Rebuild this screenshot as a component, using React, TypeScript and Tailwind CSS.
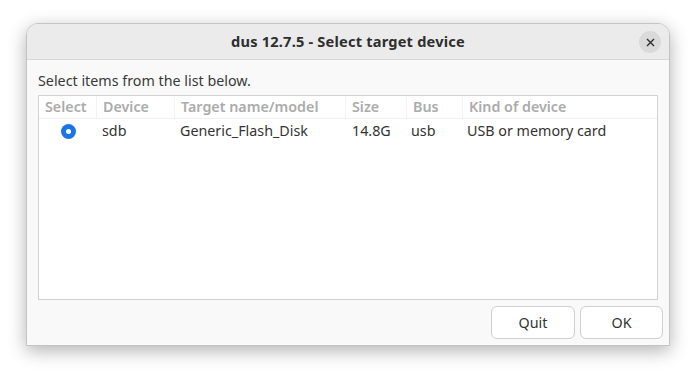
export default function App() {
  const cols = [
    { label: 'Select', w: 'w-[58px]' },
    { label: 'Device', w: 'w-[78px]' },
    { label: 'Target name/model', w: 'w-[171px]' },
    { label: 'Size', w: 'w-[61px]' },
    { label: 'Bus', w: 'w-[56px]' },
    { label: 'Kind of device', w: 'flex-1' },
  ];

  return (
    <div
      className="w-[696px] h-[375px] bg-white pt-[23px] pl-[26px]"
      style={{ fontFamily: '"Noto Sans", "Open Sans", sans-serif' }}
    >
      <div className="w-[644px] h-[323px] flex flex-col bg-[#f9f9f9] rounded-t-[12px] border border-[#c4c4c4] shadow-[0_5px_18px_rgba(0,0,0,0.3)] overflow-hidden">
        {/* Title bar */}
        <div className="relative h-[36px] shrink-0 flex items-center justify-center bg-[#ebebeb] border-b border-[#d6d6d6]">
          <span className="text-[14.6px] tracking-[0.2px] font-bold text-[#2e2e2e]">dus 12.7.5 - Select target device</span>
          <button className="absolute right-[8px] top-[7px] w-[22px] h-[22px] rounded-full bg-[#dadada] flex items-center justify-center">
            <svg width="9" height="9" viewBox="0 0 9 9">
              <path d="M1 1L8 8M8 1L1 8" stroke="#2e2e2e" strokeWidth="1.4" />
            </svg>
          </button>
        </div>

        {/* Body */}
        <div className="flex-1 flex flex-col px-[11px] pt-[10px]">
          <div className="text-[14.3px] text-[#3a3a3a] leading-[22px] h-[25px]">Select items from the list below.</div>
          <div className="h-[205px] bg-white border border-[#d2d2d2] flex flex-col">
            <div className="flex h-[23px] items-center border-b border-[#f0f0f0]">
              {cols.map((c, i) => (
                <div
                  key={c.label}
                  className={`${c.w} h-full flex items-center px-[6px] text-[14.3px] font-semibold text-[#ababab] ${i < cols.length - 1 ? 'border-r border-[#f2f2f2]' : ''}`}
                >
                  {c.label}
                </div>
              ))}
            </div>
            <div className="flex h-[24px] items-center text-[14.3px] text-[#333333]">
              <div className="w-[58px] flex justify-center">
                <span className="w-[15px] h-[15px] rounded-full bg-[#1a73e8] flex items-center justify-center">
                  <span className="w-[5px] h-[5px] rounded-full bg-white" />
                </span>
              </div>
              <div className="w-[78px] px-[5px]">sdb</div>
              <div className="w-[171px] px-[5px]">Generic_Flash_Disk</div>
              <div className="w-[61px] px-[6px]">14.8G</div>
              <div className="w-[56px] px-[4px]">usb</div>
              <div className="flex-1 px-[4px]">USB or memory card</div>
            </div>
          </div>
          <div className="flex justify-end gap-[5px] pt-[6px] mr-[-5px]">
            <button className="w-[84px] h-[33px] rounded-[6px] bg-white border border-[#d0d0d0] text-[14.3px] text-[#333333]">Quit</button>
            <button className="w-[83px] h-[33px] rounded-[6px] bg-white border border-[#d0d0d0] text-[14.3px] text-[#333333]">OK</button>
          </div>
        </div>
      </div>
    </div>
  );
}
